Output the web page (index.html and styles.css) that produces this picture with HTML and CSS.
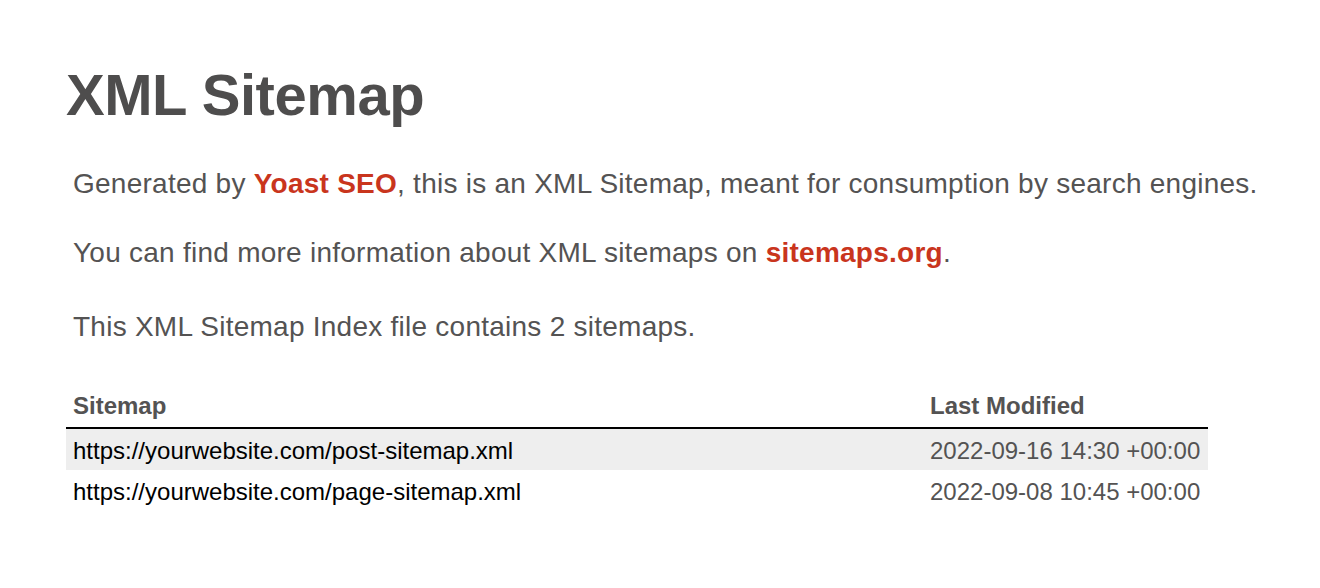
FILE: index.html
```html
<!DOCTYPE html>
<html>
<head>
<meta charset="utf-8">
<link rel="stylesheet" href="styles.css">
</head>
<body>
<div class="content">
  <h1 class="title">XML Sitemap</h1>
  <p class="expl">Generated by <a class="link" href="#">Yoast SEO</a>, this is an XML Sitemap, meant for consumption by search engines.</p>
  <p class="expl">You can find more information about XML sitemaps on <a class="link" href="#">sitemaps.org</a>.</p>
  <p class="expl count">This XML Sitemap Index file contains 2 sitemaps.</p>
  <table class="sitemap">
    <thead>
      <tr><th class="col-url">Sitemap</th><th class="col-date">Last Modified</th></tr>
    </thead>
    <tbody>
      <tr class="odd"><td class="url">https://yourwebsite.com/post-sitemap.xml</td><td class="date">2022-09-16 14:30 +00:00</td></tr>
      <tr><td class="url">https://yourwebsite.com/page-sitemap.xml</td><td class="date">2022-09-08 10:45 +00:00</td></tr>
    </tbody>
  </table>
</div>
</body>
</html>
```
FILE: styles.css
```css
html, body {
  margin: 0;
  padding: 0;
  background: #fff;
}
body {
  font-family: "Liberation Sans", Arial, Helvetica, sans-serif;
  color: #545353;
}
.content {
  padding: 62px 0 0 66px;
}
.title {
  margin: 0 0 39px 0;
  font-size: 58px;
  line-height: 66px;
  letter-spacing: -0.45px;
  font-weight: bold;
  color: #4e4d4d;
}
.expl {
  margin: 0 0 0 7px;
  font-size: 28px;
  line-height: 34px;
  letter-spacing: 0.25px;
  color: #545353;
  white-space: nowrap;
}
.expl + .expl {
  margin-top: 35px;
}
.expl.count {
  margin-top: 40px;
}
.link {
  color: #c9351d;
  font-weight: bold;
  text-decoration: none;
}
.sitemap {
  margin-top: 42px;
  width: 1142px;
  border-collapse: collapse;
}
.sitemap th {
  text-align: left;
  font-size: 24px;
  line-height: 27px;
  font-weight: bold;
  color: #545353;
  padding: 6px 7px 8px 7px;
  border-bottom: 2px solid #000;
}
.sitemap td {
  font-size: 24px;
  line-height: 27px;
  padding: 8px 7px 6px 7px;
}
.sitemap tr.odd td {
  background: #eee;
}
.url {
  color: #000;
}
.date {
  color: #545353;
}
.col-date, .date {
  width: 271px;
}
```
